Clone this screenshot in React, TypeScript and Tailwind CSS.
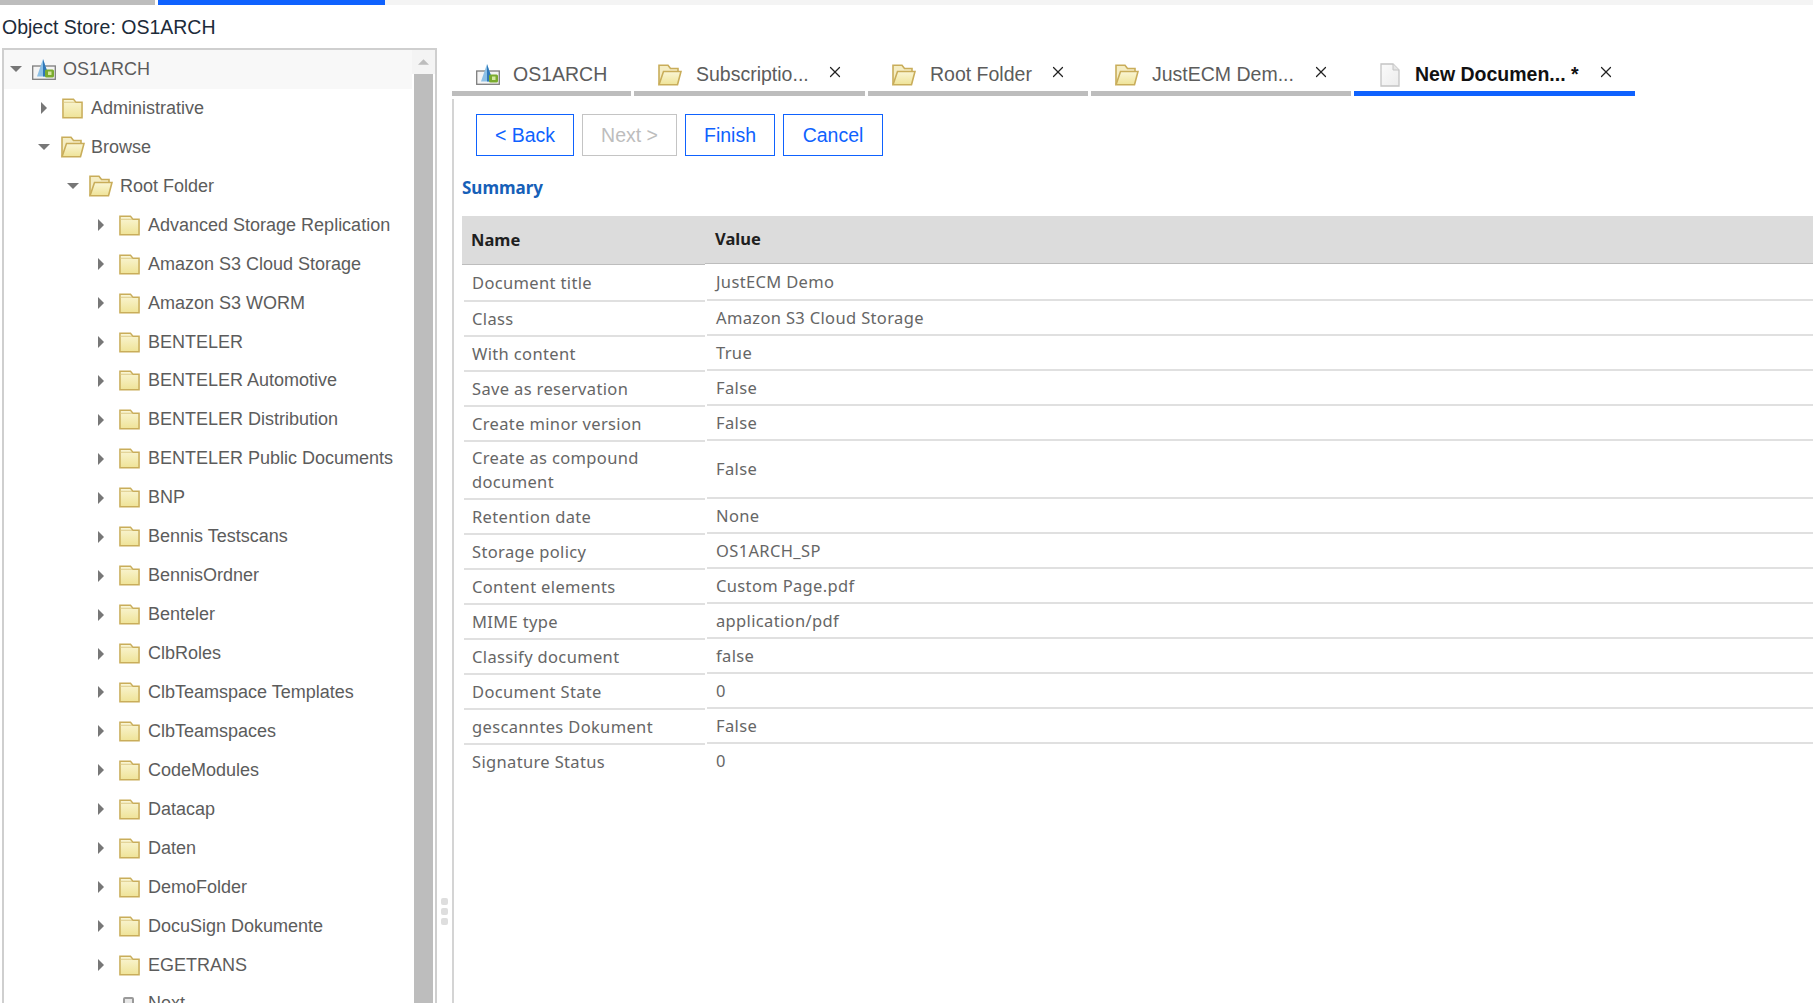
import type { ReactNode } from "react"
import { X } from "lucide-react"

const treeFolders = [
  "Advanced Storage Replication",
  "Amazon S3 Cloud Storage",
  "Amazon S3 WORM",
  "BENTELER",
  "BENTELER Automotive",
  "BENTELER Distribution",
  "BENTELER Public Documents",
  "BNP",
  "Bennis Testscans",
  "BennisOrdner",
  "Benteler",
  "ClbRoles",
  "ClbTeamspace Templates",
  "ClbTeamspaces",
  "CodeModules",
  "Datacap",
  "Daten",
  "DemoFolder",
  "DocuSign Dokumente",
  "EGETRANS",
]

const summaryRows = [
  ["Document title", "JustECM Demo"],
  ["Class", "Amazon S3 Cloud Storage"],
  ["With content", "True"],
  ["Save as reservation", "False"],
  ["Create minor version", "False"],
  ["Create as compound document", "False"],
  ["Retention date", "None"],
  ["Storage policy", "OS1ARCH_SP"],
  ["Content elements", "Custom Page.pdf"],
  ["MIME type", "application/pdf"],
  ["Classify document", "false"],
  ["Document State", "0"],
  ["gescanntes Dokument", "False"],
  ["Signature Status", "0"],
]

function FolderClosed({ className }: { className?: string }) {
  return (
    <svg viewBox="0 0 22 22" className={className}>
      <defs>
        <linearGradient id="fc" x1="0" y1="0" x2="0" y2="1">
          <stop offset="0" stopColor="#faf6d6" />
          <stop offset="1" stopColor="#efe397" />
        </linearGradient>
      </defs>
      <path d="M1 20.8V1.2H12L14.5 4.5H21V20.8Z" fill="url(#fc)" stroke="#c9ad5a" strokeWidth="1.6" />
      <path d="M1.5 4.5H14" stroke="#dcc987" strokeWidth="1" />
    </svg>
  )
}

function FolderOpen({ className }: { className?: string }) {
  return (
    <svg viewBox="0 0 24 22" className={className}>
      <defs>
        <linearGradient id="fo" x1="0" y1="0" x2="0" y2="1">
          <stop offset="0" stopColor="#faf6d6" />
          <stop offset="1" stopColor="#efe397" />
        </linearGradient>
      </defs>
      <path d="M1 20.8V1.2H10L12.5 4.5H20V8" fill="#f5edc3" stroke="#c9ad5a" strokeWidth="1.6" />
      <path d="M1 20.8H19.5L23 7.5H5.5Z" fill="url(#fo)" stroke="#c9ad5a" strokeWidth="1.6" />
    </svg>
  )
}

function StoreIcon({ className }: { className?: string }) {
  return (
    <svg viewBox="0 0 24 21" className={className}>
      <rect x="0.7" y="7" width="22.6" height="13.3" fill="#f4f4f4" stroke="#7d7d7d" strokeWidth="1.3" />
      <path d="M11 0L5 17.5H17Z" fill="#8cc0e6" />
      <path d="M11 0L11 17.5H17Z" fill="#2f78b8" />
      <rect x="13" y="10.5" width="9" height="8" rx="1.5" fill="#7aab2e" />
      <rect x="16" y="12.5" width="3.5" height="3.5" fill="#d4e8a0" />
    </svg>
  )
}

function DocIcon({ className }: { className?: string }) {
  return (
    <svg viewBox="0 0 20 24" className={className}>
      <defs>
        <linearGradient id="dc" x1="0" y1="0" x2="1" y2="1">
          <stop offset="0" stopColor="#fbfbfb" />
          <stop offset="1" stopColor="#ececec" />
        </linearGradient>
      </defs>
      <path d="M1 1H13L19 7V23H1Z" fill="url(#dc)" stroke="#c4c4c4" strokeWidth="1.3" />
      <path d="M13 1V7H19" fill="#e6e6e6" stroke="#c4c4c4" strokeWidth="1" />
    </svg>
  )
}

function Arrow({ open }: { open?: boolean }) {
  return open ? (
    <svg viewBox="0 0 12 6" className="w-[12px] h-[6px]">
      <path d="M0 0H12L6 6Z" fill="#777777" />
    </svg>
  ) : (
    <svg viewBox="0 0 6 12" className="w-[6px] h-[12px]">
      <path d="M0 0L6 6L0 12Z" fill="#777777" />
    </svg>
  )
}

function TreeRow({ level, open, icon, label, leaf, highlight }: {
  level: 0 | 1 | 2 | 3
  open?: boolean
  icon: ReactNode
  label: string
  leaf?: boolean
  highlight?: boolean
}) {
  const indent = ["pl-0", "pl-[28px]", "pl-[57px]", "pl-[85px]"][level]
  return (
    <div className={`flex items-center h-[38.95px] shrink-0 ${indent} ${highlight ? "bg-[#f8f8f8]" : ""}`}>
      <div className="w-[30px] flex justify-center shrink-0 pr-[6px]">{!leaf && <Arrow open={open} />}</div>
      <div className="w-[29px] flex justify-start shrink-0">{icon}</div>
      <span className="text-[18px] text-[#5c5c5c] whitespace-nowrap">{label}</span>
    </div>
  )
}

function Tab({ width, icon, label, iconPad, gap, active, closeGap, modified }: {
  width: string
  icon: ReactNode
  label: string
  iconPad: string
  gap: string
  active?: boolean
  closeGap?: string
  modified?: boolean
}) {
  return (
    <div className={`${width} h-[48px] pt-[10px] flex items-center border-b-[5px] ${iconPad} ${active ? "border-[#0f62fe]" : "border-[#bdbdbd]"}`}>
      <div className={`${gap} shrink-0 flex`}>{icon}</div>
      <span className={`text-[19.5px] whitespace-nowrap ${active ? "font-bold text-[#111111]" : "text-[#5c5c5c]"}`}>
        {label}
        {modified && <span className="text-[#111111]"> *</span>}
      </span>
      {closeGap && (
        <div className={`${closeGap} flex -mt-[6px]`}>
          <X size={18} strokeWidth={1.6} className="text-[#222222]" />
        </div>
      )}
    </div>
  )
}

function WizardButton({ label, width, disabled }: { label: string; width: string; disabled?: boolean }) {
  return (
    <button
      className={`${width} h-[42px] pt-[1px] border text-[19.5px] flex items-center justify-center ${
        disabled ? "border-[#c4c4c4] text-[#bdbdbd]" : "border-[#0f62fe] text-[#0f62fe]"
      }`}
    >
      {label}
    </button>
  )
}

function SummaryColumn({ title, width, headHeight, index, headPad, cellPad }: {
  title: string
  width: string
  headHeight: string
  index: 0 | 1
  headPad: string
  cellPad: string
}) {
  return (
    <div className={`${width} flex flex-col`}>
      <div className={`${headHeight} bg-[#dcdcdc] border-b border-[#bdbdbd] flex items-center ${headPad} text-[16.5px] font-bold text-[#1f1f1f]`}>
        {title}
      </div>
      {summaryRows.map((row, i) => {
        const last = i === summaryRows.length - 1
        let height = "h-[35px]"
        if (i === 0) height = "h-[37px]"
        if (i === 5) height = "h-[58px]"
        if (last) height = "h-[33px]"
        return (
          <div
            key={row[0]}
            className={`flex items-center ml-[2px] ${cellPad} ${height} ${last ? "" : "border-b-2 border-[#e0e0e0]"} text-[16.5px] tracking-[0.35px] leading-[24px] text-[#666666]`}
          >
            {row[index]}
          </div>
        )
      })}
    </div>
  )
}

export default function App() {
  return (
    <div className="w-[1813px] h-[1003px] overflow-hidden bg-white flex flex-col font-['Liberation_Sans',sans-serif]">
      <div className="h-[5px] bg-[#f4f4f4] flex shrink-0">
        <div className="w-[155px] bg-[#bdbdbd]" />
        <div className="w-[3px] bg-white" />
        <div className="w-[227px] bg-[#0f62fe]" />
      </div>
      <div className="h-[43px] shrink-0 pl-[2px] pt-[2px] flex items-center text-[19.5px] text-[#1c2b3a]">Object Store: OS1ARCH</div>

      <div className="flex-1 flex min-h-0">
        <div className="ml-[2px] w-[435px] border-t-2 border-x-2 border-[#cfcfcf] flex overflow-hidden shrink-0">
          <div className="w-[408px] flex flex-col overflow-hidden">
            <TreeRow level={0} open highlight icon={<StoreIcon className="w-[24px] h-[21px] -ml-[2px]" />} label="OS1ARCH" />
            <TreeRow level={1} icon={<FolderClosed className="w-[21px] h-[21px]" />} label="Administrative" />
            <TreeRow level={1} open icon={<FolderOpen className="w-[24px] h-[22px] -ml-[1px]" />} label="Browse" />
            <TreeRow level={2} open icon={<FolderOpen className="w-[24px] h-[22px] -ml-[2px]" />} label="Root Folder" />
            {treeFolders.map((name) => (
              <TreeRow key={name} level={3} icon={<FolderClosed className="w-[21px] h-[21px]" />} label={name} />
            ))}
            <TreeRow
              level={3}
              leaf
              icon={
                <div className="pl-[4px]">
                  <div className="w-[11px] h-[14px] rounded-[2px] border-2 border-[#9a9a9a] bg-[#e8e8e8]" />
                </div>
              }
              label="Next"
            />
          </div>
          <div className="flex-1 flex flex-col">
            <div className="h-[24px] bg-[#f4f4f4] flex items-center justify-center">
              <svg viewBox="0 0 12 6" className="w-[11px] h-[6px]">
                <path d="M0 6H12L6 0Z" fill="#bdbdbd" />
              </svg>
            </div>
            <div className="flex-1 mx-[2px] bg-[#bdbdbd]" />
          </div>
        </div>

        <div className="w-[15px] shrink-0 flex flex-col items-center justify-end gap-[3px] pb-[78px]">
          <div className="w-[7px] h-[7px] rounded-[2px] bg-[#dedede]" />
          <div className="w-[7px] h-[7px] rounded-[2px] bg-[#dedede]" />
          <div className="w-[7px] h-[7px] rounded-[2px] bg-[#dedede]" />
        </div>

        <div className="flex-1 min-w-0 flex flex-col">
          <div className="flex gap-[3px] h-[48px] shrink-0">
            <Tab width="w-[179px]" iconPad="pl-[24px]" gap="w-[37px]" icon={<StoreIcon className="w-[24px] h-[21px]" />} label="OS1ARCH" />
            <Tab width="w-[231px]" iconPad="pl-[24px]" gap="w-[38px]" closeGap="ml-[17px]" icon={<FolderOpen className="w-[24px] h-[22px]" />} label="Subscriptio..." />
            <Tab width="w-[220px]" iconPad="pl-[24px]" gap="w-[38px]" closeGap="ml-[17px]" icon={<FolderOpen className="w-[24px] h-[22px]" />} label="Root Folder" />
            <Tab width="w-[260px]" iconPad="pl-[24px]" gap="w-[37px]" closeGap="ml-[18px]" icon={<FolderOpen className="w-[24px] h-[22px]" />} label="JustECM Dem..." />
            <Tab width="w-[281px]" iconPad="pl-[26px]" gap="w-[35px]" closeGap="ml-[18px]" active modified icon={<DocIcon className="w-[20px] h-[24px]" />} label="New Documen..." />
          </div>
          <div className="flex-1 min-h-0 border-l-2 border-[#d4d4d4] mt-[3px] pl-[8px]">
            <div className="flex gap-[8px] pl-[14px] pt-[15px]">
              <WizardButton label="< Back" width="w-[98px]" />
              <WizardButton label="Next >" width="w-[95px]" disabled />
              <WizardButton label="Finish" width="w-[90px]" />
              <WizardButton label="Cancel" width="w-[100px]" />
            </div>
            <div className="pt-[22px] text-[17px] leading-[20px] font-bold text-[#1660b8] font-['Noto_Sans',sans-serif]">Summary</div>
            <div className="mt-[18px] flex items-start font-['Noto_Sans',sans-serif]">
              <SummaryColumn title="Name" width="w-[243px]" headHeight="h-[49px]" index={0} headPad="pl-[9px]" cellPad="pl-[8px]" />
              <div className="flex-1">
                <SummaryColumn title="Value" width="w-full" headHeight="h-[48px]" index={1} headPad="pl-[10px]" cellPad="pl-[9px]" />
              </div>
            </div>
          </div>
        </div>
      </div>
    </div>
  )
}
